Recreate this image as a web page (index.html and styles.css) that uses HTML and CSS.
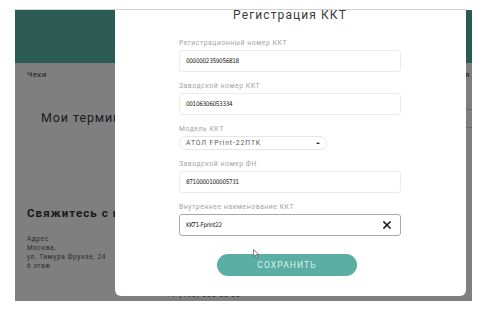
FILE: index.html
```html
<!DOCTYPE html>
<html lang="ru">
<head>
<meta charset="utf-8">
<title>Регистрация ККТ</title>
<link rel="stylesheet" href="styles.css">
</head>
<body>
<div class="topline"></div>
<div class="frame">
  <div class="page">
    <header class="hdr"></header>
    <nav class="nav"><span>Чеки</span><span>Регистрация</span></nav>
    <section class="terms">
      <h2 class="terms-title">Мои терминалы</h2>
      <div class="tbl"><div class="tr">1</div></div>
    </section>
    <section class="contact">
      <h2 class="contact-title">Свяжитесь с нами</h2>
      <div class="cgrid">
        <div class="addr">Адрес<br>Москва,<br>ул. Тимура Фрунзе, 24<br>6 этаж</div>
        <div class="phone">+7 (495) 000-00-00</div>
      </div>
    </section>
  </div>
  <div class="backdrop"></div>
  <div class="modal">
    <h1 class="title">Регистрация ККТ</h1>
    <form class="form">
      <div class="field">
        <label class="lbl">Регистрационный номер ККТ</label>
        <div class="inp">0000002359056818</div>
      </div>
      <div class="field">
        <label class="lbl">Заводской номер ККТ</label>
        <div class="inp">00106306053334</div>
      </div>
      <div class="field">
        <label class="lbl">Модель ККТ</label>
        <div class="sel"><span>АТОЛ FPrint-22ПТК</span><i class="caret"></i></div>
      </div>
      <div class="field">
        <label class="lbl">Заводской номер ФН</label>
        <div class="inp">8710000100005731</div>
      </div>
      <div class="field">
        <label class="lbl">Внутреннее наименование ККТ</label>
        <div class="inp inp-focus"><span>KKT1-Fprint22</span>
          <svg class="clear" width="8" height="8" viewBox="0 0 8 8"><path d="M1 1L7 7M7 1L1 7" stroke="#1e1e1e" stroke-width="1.6" stroke-linecap="square"/></svg>
        </div>
      </div>
      <button type="button" class="save">СОХРАНИТЬ</button>
    </form>
  </div>
  <svg class="cursor" width="7" height="10" viewBox="0 0 7 10"><path d="M0.5 0.5L0.5 7.6L2.2 6L3.5 8.9L4.6 8.4L3.4 5.6L5.8 5.6Z" fill="#fff" stroke="#555" stroke-width="0.7" stroke-linejoin="round"/></svg>
</div>
</body>
</html>
```
FILE: styles.css
```css
* { box-sizing: border-box; }
html, body { margin: 0; padding: 0; }
body {
  background: #fff;
  font-family: Roboto, "Liberation Sans", sans-serif;
  width: 487px;
  height: 316px;
  overflow: hidden;
}
.topline {
  margin: 9px 0 0 14px;
  width: 452px;
  height: 1px;
  background: #d2d2d2;
}
.frame {
  position: relative;
  margin-left: 15px;
  width: 457px;
  height: 291px;
  overflow: hidden;
  background: #fff;
}
.page { color: #333; }
.hdr { height: 53px; background: #58b6a9; }
.nav {
  display: flex;
  justify-content: space-between;
  padding: 7px 2px 0 12px;
  height: 17px;
  font-size: 7.5px;
  line-height: 10px;
  letter-spacing: 0.6px;
  color: #333;
}
.terms {
  display: flex;
  align-items: center;
  margin-top: 28px;
  padding-left: 26px;
  height: 20px;
}
.terms-title {
  margin: 0;
  font-weight: 400;
  font-size: 12.5px;
  line-height: 16px;
  letter-spacing: 0.9px;
  color: #383838;
}
.tbl {
  margin-left: auto;
  width: 130px;
  height: 19px;
  border-top: 1px solid #ccc;
  border-bottom: 1px solid #ccc;
}
.tr {
  padding-left: 118px;
  font-size: 7px;
  line-height: 17px;
  color: #444;
}
.contact { margin-top: 77px; padding-left: 12px; }
.contact-title {
  margin: 0;
  font-weight: 700;
  font-size: 11.5px;
  line-height: 16px;
  letter-spacing: 1.1px;
  color: #333;
}
.cgrid {
  display: grid;
  grid-template-columns: 140px 1fr;
  margin-top: 14px;
}
.addr {
  font-size: 6.5px;
  line-height: 9px;
  letter-spacing: 0.6px;
  color: #555;
}
.phone {
  padding-top: 56px;
  font-size: 7px;
  line-height: 9px;
  letter-spacing: 0.8px;
  color: #444;
}
.backdrop {
  position: absolute;
  inset: 0;
  background: rgba(0, 0, 0, 0.5);
}
.modal {
  position: absolute;
  left: 100px;
  top: 0;
  width: 351px;
  height: 286px;
  background: #fff;
  border-radius: 0 0 6px 6px;
  padding: 0 65px 0 64px;
}
.title {
  margin: -1px 0 0;
  text-align: center;
  font-weight: 400;
  font-size: 12px;
  line-height: 12px;
  letter-spacing: 1.1px;
  color: #3a3a3a;
}
.form {
  display: flex;
  flex-direction: column;
  gap: 9px;
  margin-top: 17px;
}
.field { display: flex; flex-direction: column; }
.lbl {
  height: 10px;
  margin-bottom: 2px;
  font-size: 6.8px;
  line-height: 10px;
  letter-spacing: 0.55px;
  color: #a2a2a2;
}
.inp {
  display: flex;
  align-items: center;
  justify-content: space-between;
  height: 22px;
  padding: 0 9px 0 6px;
  border: 1px solid #ebebeb;
  border-radius: 3px;
  font-family: "DejaVu Sans", Roboto, sans-serif;
  font-stretch: condensed;
  font-size: 6.4px;
  letter-spacing: -0.35px;
  color: #1e1e1e;
}
.inp-focus { border-color: #a9a9a9; }
.clear { display: block; }
.sel {
  display: flex;
  align-items: center;
  justify-content: space-between;
  width: 148px;
  height: 14px;
  padding: 0 6px 0 6px;
  border: 1px solid #e6e6e6;
  border-radius: 7px;
  font-size: 6.8px;
  letter-spacing: 0.9px;
  color: #555;
}
.caret {
  width: 0;
  height: 0;
  border-left: 2px solid transparent;
  border-right: 2px solid transparent;
  border-bottom: 2.5px solid #333;
}
.save {
  align-self: flex-start;
  margin: 9px 0 0 38px;
  width: 140px;
  height: 22px;
  border: 0;
  border-radius: 11px;
  background: #5aaea3;
  color: #daf1ed;
  font-family: Roboto, "Liberation Sans", sans-serif;
  font-size: 8.5px;
  letter-spacing: 1.1px;
  padding: 0;
}
.cursor {
  position: absolute;
  left: 238px;
  top: 239px;
}
```
